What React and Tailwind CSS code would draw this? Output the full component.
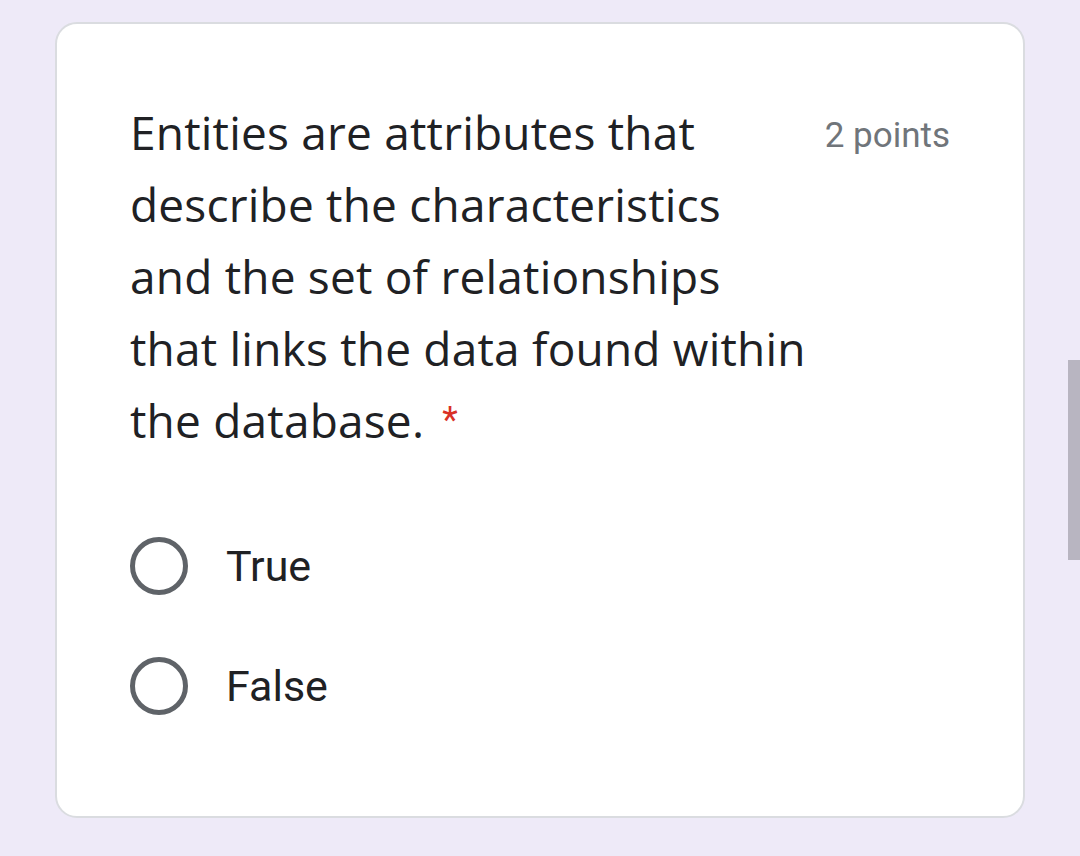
import React from "react";

const Radio = ({ label }) => (
    <label className="flex items-center gap-[38px] h-[60px]">
        <span className="w-[58px] h-[58px] rounded-full border-[5px] border-[#5f6368] shrink-0" />
        <span className="text-[43px] text-[#202124]" style={{ fontFamily: "Roboto, sans-serif" }}>{label}</span>
    </label>
);

const lines = [
    "Entities are attributes that",
    "describe the characteristics",
    "and the set of relationships",
    "that links the data found within",
];

const App = () => {
    return (
        <div className="relative w-[1080px] h-[856px] bg-[#eeeaf8] overflow-hidden">
            {/* scrollbar thumb */}
            <div className="absolute right-0 top-[360px] w-[12px] h-[200px] bg-[#b8b5c1]" />

            <div className="pt-[22px] pl-[55px]">
                <div className="w-[970px] h-[796px] bg-white border-2 border-[#dadce0] rounded-[22px] pl-[73px] pr-[73px] pt-[72px]">
                    <div className="flex justify-between items-start">
                        <p className="text-[46px] tracking-[0.2px] leading-[72px] text-[#202124]" style={{ fontFamily: "'Open Sans', sans-serif" }}>
                            {lines.map((l) => (
                                <span key={l} className="block whitespace-nowrap">{l}</span>
                            ))}
                            <span className="block whitespace-nowrap">
                                the database.
                                <span className="text-[#d93025] text-[36px] align-top ml-[18px]" style={{ fontFamily: "Roboto, sans-serif" }}>*</span>
                            </span>
                        </p>
                        <span className="text-[35px] text-[#70757a] pt-[14px]" style={{ fontFamily: "Roboto, sans-serif" }}>2 points</span>
                    </div>

                    {/* options */}
                    <div className="flex flex-col gap-[60px] mt-[80px]">
                        <Radio label="True" />
                        <Radio label="False" />
                    </div>
                </div>
            </div>
        </div>
    );
};

export default App;
